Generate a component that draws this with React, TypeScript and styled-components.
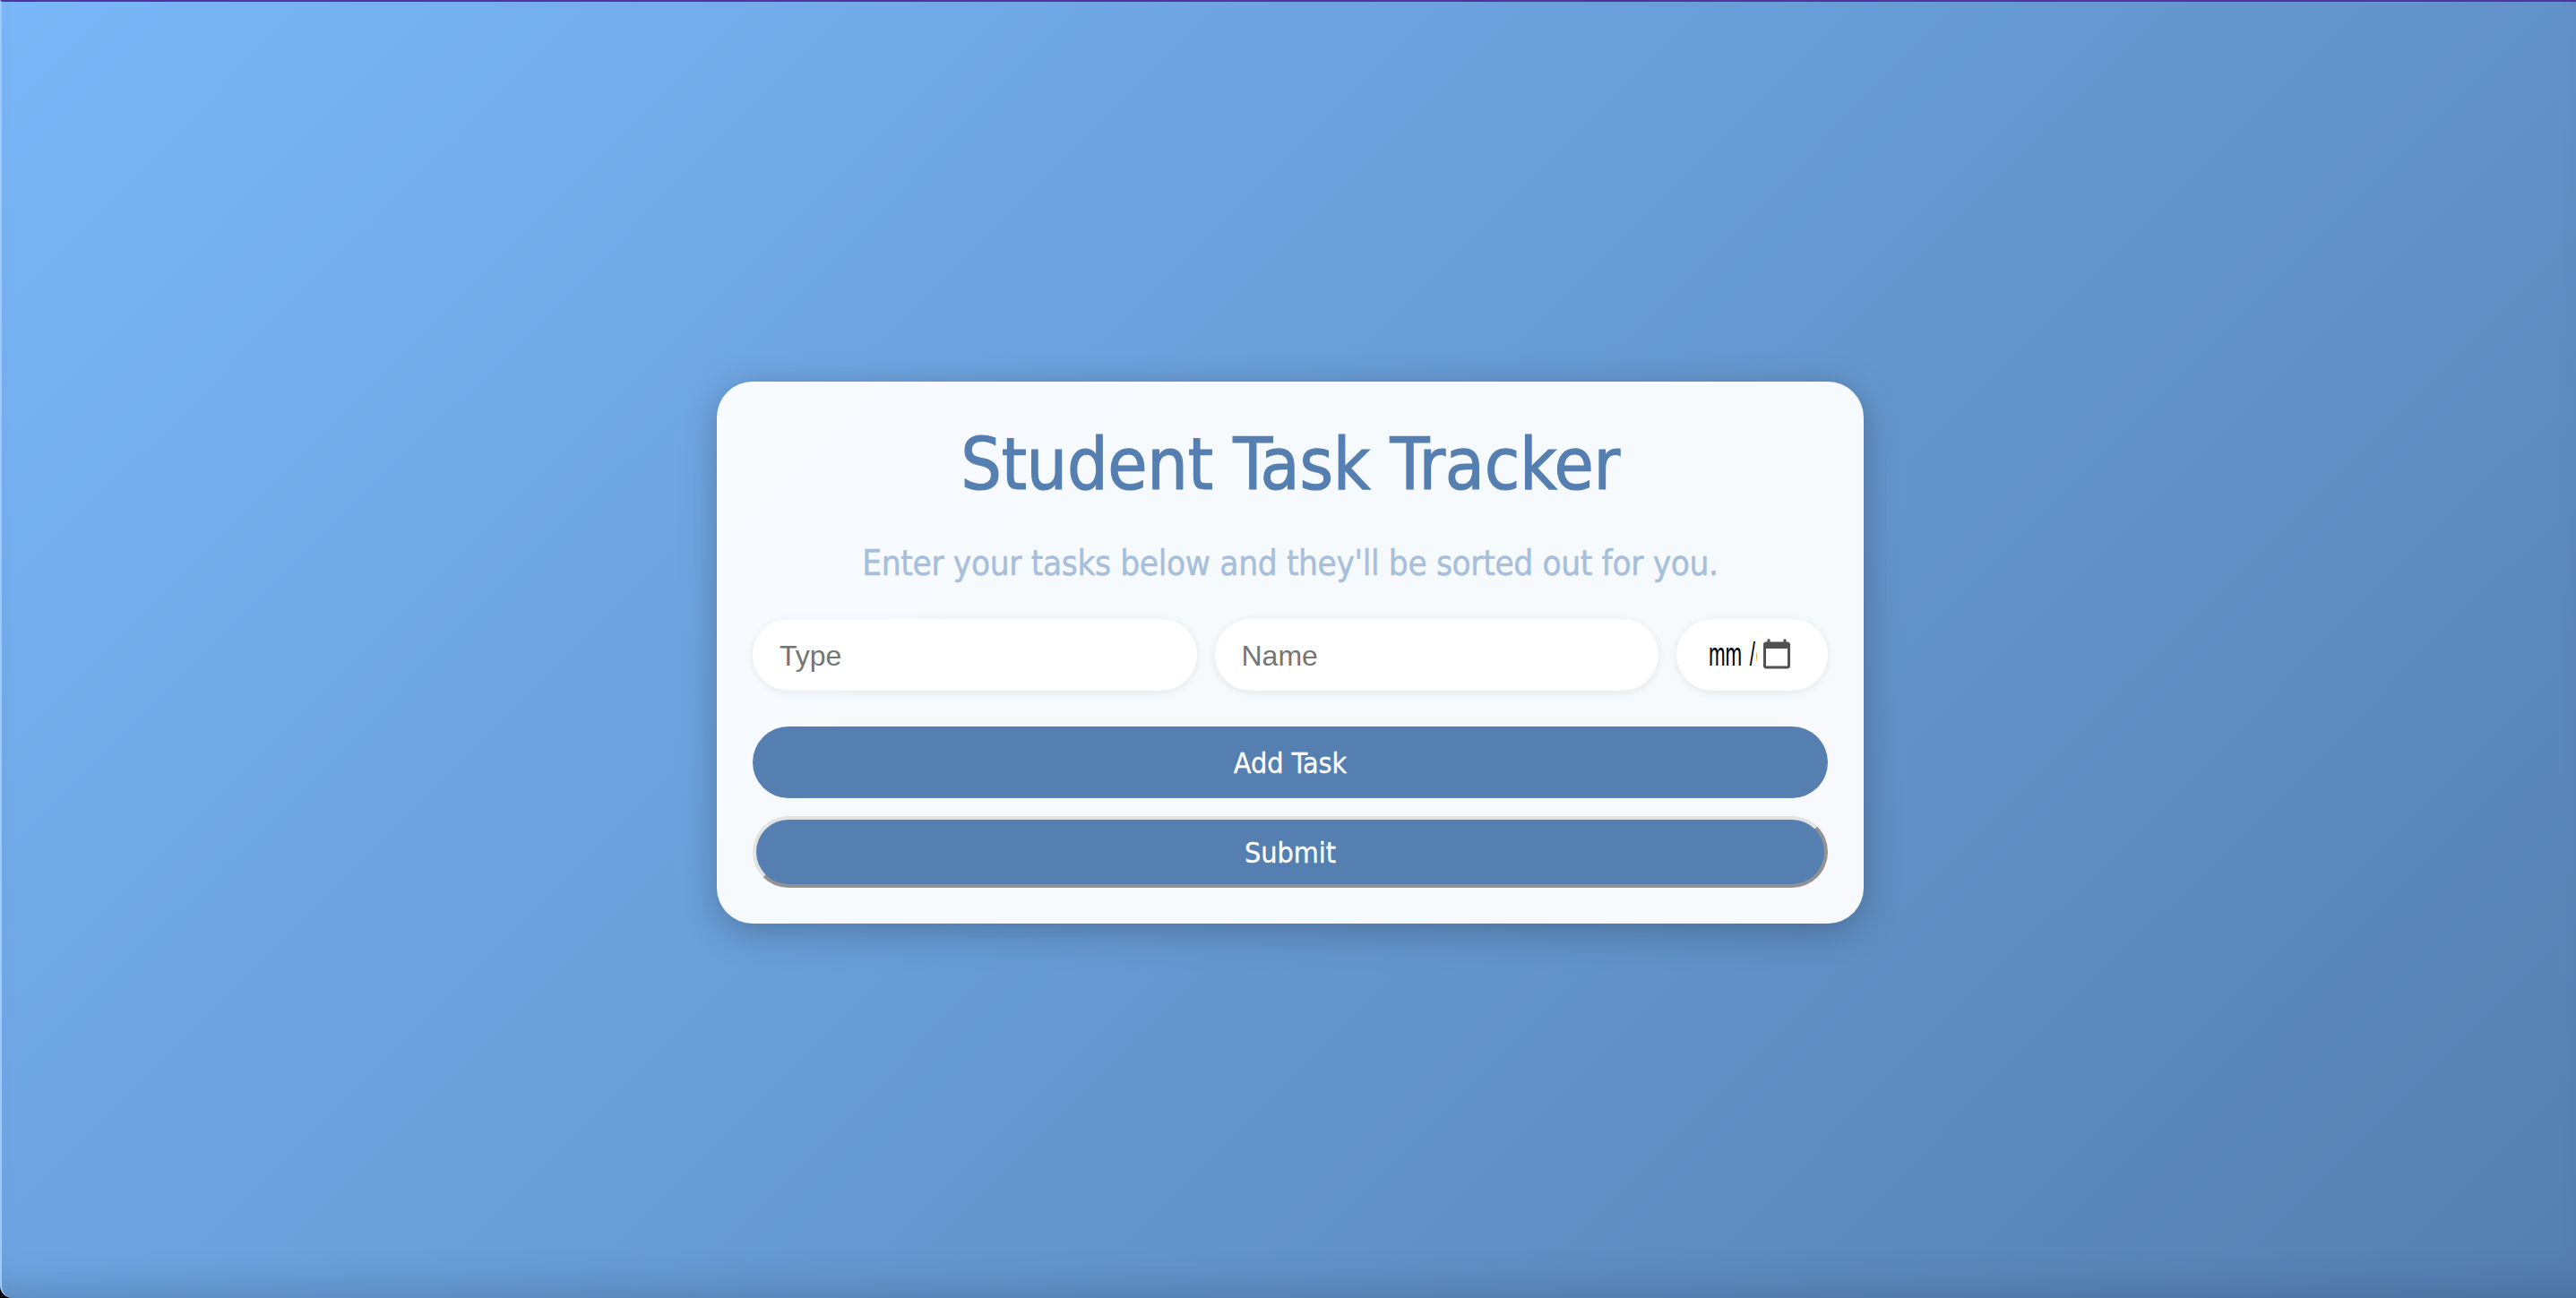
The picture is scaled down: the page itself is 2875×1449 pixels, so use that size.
import React from "react";
import styled, { createGlobalStyle } from "styled-components";

const Global = createGlobalStyle`
  html, body { margin: 0; padding: 0; height: 100%; background: #000; }
  #root { height: 100%; }
  * { box-sizing: border-box; }
  body { font-family: "DejaVu Sans Condensed", "DejaVu Sans", sans-serif; }
`;

const Page = styled.main`
  width: 2875px;
  height: 1449px;
  overflow: hidden;
  display: flex;
  align-items: center;
  justify-content: center;
  padding: 6px 0 0 3px;
  border-top: 2px solid #50349f;
  border-left: 2px solid #9ccbfa;
  border-bottom-left-radius: 14px;
  background: linear-gradient(135deg, #7ab7f8 0%, #557fb0 100%);
  box-shadow: inset 0 -40px 40px -30px rgba(40, 60, 90, 0.25);
`;

const Card = styled.section`
  width: 1280px;
  padding: 40px;
  border-radius: 40px;
  background: rgba(255, 255, 255, 0.95);
  box-shadow: 0 8px 40px rgba(0, 0, 0, 0.25);
  display: flex;
  flex-direction: column;
`;

const Title = styled.h1`
  margin: 0;
  font-size: 80px;
  line-height: 105px;
  font-weight: 400;
  letter-spacing: -0.28px;
  -webkit-text-stroke: 1.2px #557fb0;
  text-align: center;
  color: #557fb0;
`;

const Subtitle = styled.p`
  margin: 35px 0 0;
  font-size: 38.4px;
  line-height: 46px;
  letter-spacing: -0.35px;
  -webkit-text-stroke: 0.5px #a6bfdb;
  text-align: center;
  color: #a6bfdb;
`;

const Fields = styled.form`
  display: flex;
  gap: 20px;
  margin-top: 39px;
`;

const TextField = styled.input`
  flex: 1 1 0;
  min-width: 0;
  height: 80px;
  padding: 2px 30px 0;
  border: 0;
  outline: 0;
  border-radius: 40px;
  background: #fff;
  font-family: "Liberation Sans", Arial, sans-serif;
  font-size: 32px;
  box-shadow: 0 2px 10px rgba(0, 0, 0, 0.08);
  &::placeholder { color: #757575; opacity: 1; }
`;

const DateField = styled.input`
  flex: 0 0 169px;
  width: 169px;
  min-width: 0;
  height: 80px;
  padding: 0 40px 0 36px;
  border: 0;
  outline: 0;
  border-radius: 40px;
  background: #fff;
  font-family: "Liberation Sans", Arial, sans-serif;
  font-size: 36px;
  box-shadow: 0 2px 10px rgba(0, 0, 0, 0.08);

  &::-webkit-datetime-edit {
    padding: 0;
    flex: 0 0 87px;
    width: 87px;
    margin-right: -33px;
    overflow: hidden;
    transform: scaleX(0.62);
    transform-origin: left center;
  }
  &::-webkit-datetime-edit-text { padding: 0 0 0 14px; }
  &::-webkit-datetime-edit-month-field { padding: 0; }
  &::-webkit-calendar-picker-indicator {
    flex: 0 0 38px;
    width: 38px;
    height: 38px;
    padding: 0;
    margin: 0 -3px 0 3px;
    background-size: contain;
    opacity: 0.68;
  }
`;

const Action = styled.button<{ $outset?: boolean }>`
  width: 100%;
  height: 80px;
  margin-top: ${(p) => (p.$outset ? "20px" : "40px")};
  border-radius: 40px;
  border-width: ${(p) => (p.$outset ? "4px" : "0")};
  border-color: #e3e3e3 #929292 #929292 #e3e3e3;
  border-style: ${(p) => (p.$outset ? "solid" : "none")};
  background: #557fb0;
  color: #fff;
  font-family: "DejaVu Sans Condensed", "DejaVu Sans", sans-serif;
  font-size: 32px;
  -webkit-text-stroke: 0.3px #fff;
  padding: 2px 0 0;
`;

export default function App() {
  return (
    <>
      <Global />
      <Page>
        <Card>
          <Title>Student Task Tracker</Title>
          <Subtitle>Enter your tasks below and they'll be sorted out for you.</Subtitle>
          <Fields onSubmit={(e) => e.preventDefault()}>
            <TextField placeholder="Type" />
            <TextField placeholder="Name" />
            <DateField type="date" />
          </Fields>
          <Action type="button">Add Task</Action>
          <Action type="button" $outset>Submit</Action>
        </Card>
      </Page>
    </>
  );
}
